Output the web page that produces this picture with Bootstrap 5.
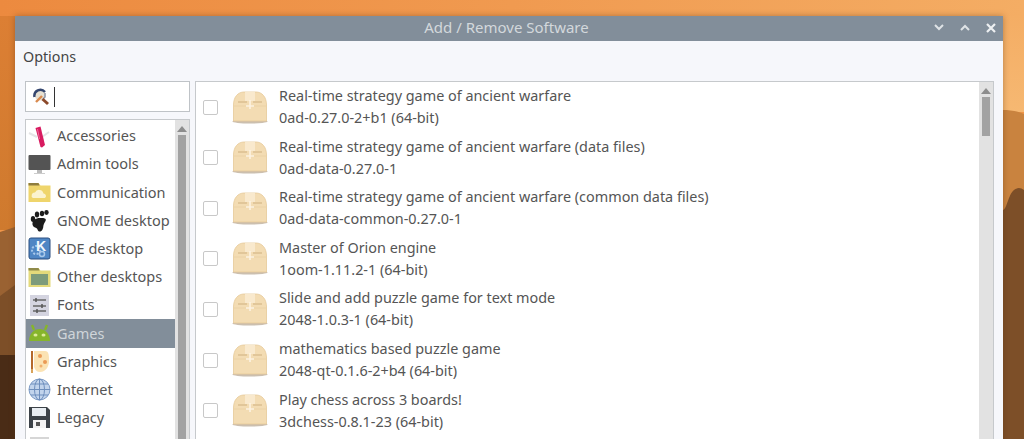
<!DOCTYPE html>
<html lang="en"><head><meta charset="utf-8"><title>Add / Remove Software</title>
<link href="https://cdn.jsdelivr.net/npm/bootstrap@5.3.0/dist/css/bootstrap.min.css" rel="stylesheet">
<style>
html,body{height:439px;overflow:hidden}
body{font-family:"Noto Sans","Open Sans",sans-serif;font-size:14px;color:#555;
background:#f09548 url("data:image/svg+xml,%3Csvg xmlns='http://www.w3.org/2000/svg' width='1024' height='439'%3E%3Cdefs%3E%3ClinearGradient id='h'%3E%3Cstop offset='0' stop-color='%23ec8a3f'/%3E%3Cstop offset='.5' stop-color='%23f09a50'/%3E%3Cstop offset='1' stop-color='%23f4ad64'/%3E%3C/linearGradient%3E%3ClinearGradient id='v' x2='0' y2='1'%3E%3Cstop offset='0' stop-color='%23dc7f34'/%3E%3Cstop offset='1' stop-color='%23cf7a2e'/%3E%3C/linearGradient%3E%3ClinearGradient id='r' x2='0' y2='1'%3E%3Cstop offset='0' stop-color='%23f4ad64'/%3E%3Cstop offset='1' stop-color='%23f6b872'/%3E%3C/linearGradient%3E%3C/defs%3E%3Crect width='1024' height='16' fill='url(%23h)'/%3E%3Crect y='16' width='15' height='214' fill='url(%23v)'/%3E%3Crect x='1003' y='16' width='21' height='96' fill='url(%23r)'/%3E%3Cpath d='M0 232L15 227V439H0Z' fill='%239a6232'/%3E%3Cpath d='M0 296L15 285V439H0Z' fill='%237d4f28'/%3E%3Cpath d='M0 355H15V439H0Z' fill='%234a2c16'/%3E%3Cpath d='M1003 110C1010 110 1018 111 1024 114V439H1003Z' fill='%23c9833f'/%3E%3Cpath d='M1003 210C1007 209 1008 195 1014 190C1018 187 1021 188 1024 190V439H1003Z' fill='%237d4f28'/%3E%3C/svg%3E") no-repeat 0 0;
 padding:16px 21px 0 15px}
.win{height:440px;background:#f6f7fb;box-shadow:0 0 6px rgba(90,50,20,.4)}
.ttl{height:25px;background:#828e9a;color:#d3d8dc;font-size:15px;padding-bottom:2px}
.ttl-sp{width:65px}
.ttl-name{flex:1;text-align:center}
.ttl-btns{width:70px;padding-right:6px}
.mnu{height:31px;padding-left:8px;font-size:14.3px;color:#444}
.pane{padding:9px 9px 0 10px;gap:5px;height:384px}
.side{width:165px;gap:7px}
.srch{height:31px;background:#fff;border:1px solid #bfc3c7;gap:4px;padding-left:6px;flex:none}
.crt{width:1px;height:20px;background:#333}
.cats{border:1px solid #c6c9cc;background:#fff;flex:1;min-height:0;overflow:hidden}
.catlist{flex:1;padding-top:2px}
.cat{height:28.2px;flex:none;padding-left:2px;gap:6px;font-size:14.5px;color:#555;white-space:nowrap}
.cat-on{background:#828e9a;color:#cfd5d9}
.catic{width:23px;height:23px;flex:none}
.vbar{width:14px;background:#e2e2e2;flex:none;padding:1px 1px 0}
.vup{width:0;height:0;border:5px solid transparent;border-top:0;border-bottom:6px solid #8d8d8d;margin:5px auto 3px}
.vth{background:#a2a2a2;width:8px;margin:0 auto}
.vth-l{height:auto;flex:1}
.vth-m{height:39px}
.pkgs{flex:1;border:1px solid #c6c9cc;background:#fff;overflow:hidden;min-width:0}
.rows{flex:1}
.pkg{height:50.55px;padding-left:7px;font-size:14.4px;color:#555;white-space:nowrap;flex:none}
.chk{width:15px;height:15px;border:1px solid #c8c8c8;border-radius:2px;background:#fff;flex:none}
.box{width:36px;height:33px;margin-left:14px;margin-right:11px;flex:none}
.ln{line-height:22px}
</style></head><body>
<svg width="0" height="0" class="d-block"><defs>
<symbol id="pk" viewBox="0 0 36 33"><ellipse cx="18" cy="30.500" rx="17.500" ry="2" fill="#a8957a" opacity=".6"/><path d="M1.500 14C1.500 6 6 1 12 1h12c6 0 10.500 5 10.500 13v16h-33z" fill="#f3dcb3" stroke="#e6c998" stroke-width=".8"/><path d="M2 15h32" stroke="#ebd2a6" stroke-width="1"/><path d="M13 1h10v9H13z" fill="#f9e9cd"/><path d="M6 11h9M21 11h9" stroke="#cfaf80" stroke-width="1.200"/><path d="M18 9v9M14 15h8" stroke="#fdf3e2" stroke-width="1.600"/></symbol>
</defs></svg>
<div class="win d-flex flex-column">
 <div class="ttl d-flex align-items-center">
  <div class="ttl-sp"></div><div class="ttl-name">Add / Remove Software</div>
  <div class="ttl-btns d-flex justify-content-between align-items-center">
   <svg width="12" height="9" viewBox="0 0 12 9"><path d="M2 2l4 4 4-4" fill="none" stroke="#dfe3e6" stroke-width="2"/></svg>
   <svg width="12" height="9" viewBox="0 0 12 9"><path d="M2 7l4-4 4 4" fill="none" stroke="#dfe3e6" stroke-width="2"/></svg>
   <svg width="12" height="12" viewBox="0 0 12 12"><path d="M2 2l8 8M10 2l-8 8" fill="none" stroke="#eef0f2" stroke-width="2.200"/></svg>
  </div>
 </div>
 <div class="mnu d-flex align-items-center">Options</div>
 <div class="pane d-flex">
  <div class="side d-flex flex-column">
   <div class="srch d-flex align-items-center">
    <svg width="18" height="18" viewBox="0 0 18 18"><circle cx="8" cy="7" r="5.500" fill="#e6e0d2"/><path d="M2.500 9A6 6 0 0 1 13 4" fill="none" stroke="#34466f" stroke-width="2.400"/><path d="M13 5v4l-2 2" fill="none" stroke="#8a93a8" stroke-width="1.500"/><path d="M10.500 11l5.500 5" stroke="#8c4a2b" stroke-width="3"/><path d="M4 14l6-6" stroke="#d98a4f" stroke-width="2.400"/></svg>
    <div class="crt"></div>
   </div>
   <div class="cats d-flex">
    <div class="catlist d-flex flex-column">
     <div class="cat d-flex align-items-center"><svg class="catic" viewBox="0 0 23 23"><path d="M1 8l8 4M14 12l7-5" stroke="#e4e4e6" stroke-width="2"/><path d="M7.500 3l5-1.500L17 20l-3 2.500-1.500-.5z" fill="#d81b60"/><path d="M9.500 4l2 10" stroke="#ef6b9b" stroke-width="1"/></svg>Accessories</div>
     <div class="cat d-flex align-items-center"><svg class="catic" viewBox="0 0 23 23"><rect x="0.500" y="2" width="22" height="15" rx="1" fill="#545454"/><path d="M9 17h5v3H9z" fill="#bbb"/><path d="M6 20h11v1H6z" fill="#ccc"/></svg>Admin tools</div>
     <div class="cat d-flex align-items-center"><svg class="catic" viewBox="0 0 23 23"><path d="M0.500 2h10l2 2.500h10V21H0.500z" fill="#efd56c"/><path d="M0.500 2h10l1 2.500H0.500z" fill="#8f7d3e"/><path d="M5 17a3 3 0 0 1 2-5.500 4.500 4.500 0 0 1 8.500 1A2.500 2.500 0 0 1 17 17z" fill="#fbf3d0"/></svg>Communication</div>
     <div class="cat d-flex align-items-center"><svg class="catic" viewBox="0 0 23 23"><path d="M12 9C7 9 4 12 4.500 15.500S9 18 9.500 20.500 13 23.500 14.500 20.500 14.500 17 17 13 16 9 12 9z" fill="#1c1c1c"/><ellipse cx="5" cy="10" rx="2.200" ry="3" fill="#1c1c1c"/><ellipse cx="9" cy="5.500" rx="2.200" ry="3" fill="#1c1c1c"/><ellipse cx="14" cy="4.500" rx="2.200" ry="2.800" fill="#1c1c1c"/><ellipse cx="18.500" cy="3.500" rx="2.200" ry="2.400" fill="#1c1c1c"/></svg>GNOME desktop</div>
     <div class="cat d-flex align-items-center"><svg class="catic" viewBox="0 0 23 23"><rect x="1" y="1" width="21" height="21" rx="2" fill="#4f86c4" stroke="#2c4f80"/><circle cx="8" cy="13" r="4" fill="none" stroke="#a8c8ea" stroke-width="2" stroke-dasharray="2 1.500"/><circle cx="14" cy="17" r="2.500" fill="none" stroke="#a8c8ea" stroke-width="1.500"/><text x="13" y="14" font-size="14" font-weight="700" fill="#f2f7fc" text-anchor="middle" font-family="Liberation Sans">K</text></svg>KDE desktop</div>
     <div class="cat d-flex align-items-center"><svg class="catic" viewBox="0 0 23 23"><path d="M0.500 2h10l2 2.500h10V21H0.500z" fill="#e3d97a"/><path d="M0.500 2h10l1 2.500H0.500z" fill="#8f8a4b"/><path d="M3 8h17v11H3z" fill="#7d9b7a"/></svg>Other desktops</div>
     <div class="cat d-flex align-items-center"><svg class="catic" viewBox="0 0 23 23"><rect x="2" y="1" width="19" height="21" fill="#d4d4e0"/><path d="M5 6h13M5 12h13M5 17h13" stroke="#666" stroke-width="1.300"/><path d="M8 4v4M14 10v4M9 15v4" stroke="#555" stroke-width="1.500"/></svg>Fonts</div>
     <div class="cat cat-on d-flex align-items-center"><svg class="catic" viewBox="0 0 23 23"><path d="M1 19c0-7 4.500-12 10.500-12S22 12 22 19z" fill="#86b52b"/><path d="M6 8L4 3M17 8l2-5" stroke="#86b52b" stroke-width="2.400"/><ellipse cx="7.500" cy="13" rx="2" ry="1.500" fill="#dcea9a"/><ellipse cx="15.500" cy="13" rx="2" ry="1.500" fill="#dcea9a"/></svg>Games</div>
     <div class="cat d-flex align-items-center"><svg class="catic" viewBox="0 0 23 23"><path d="M6 1h11c4 0 4 5 4 10s-3 11-9 11c-3 0-5-2-6-5z" fill="#fbe3b4"/><path d="M4 1v19" stroke="#b5692b" stroke-width="2"/><path d="M4 19v4" stroke="#d9a35a" stroke-width="2"/><circle cx="12" cy="6" r="2" fill="#ea9a55"/><circle cx="17" cy="12" r="2" fill="#ea9a55"/><circle cx="13" cy="16" r="1.500" fill="#f1b06e"/></svg>Graphics</div>
     <div class="cat d-flex align-items-center"><svg class="catic" viewBox="0 0 23 23"><circle cx="11.500" cy="11.500" r="10.500" fill="#c2d4ec" stroke="#7d9bc6"/><path d="M1 11.500h21M3 6h17M3 17h17M11.500 1v21" stroke="#6f8fbd"/><ellipse cx="11.500" cy="11.500" rx="5" ry="10.500" fill="none" stroke="#6f8fbd"/></svg>Internet</div>
     <div class="cat d-flex align-items-center"><svg class="catic" viewBox="0 0 23 23"><path d="M1 1h18l3 3v18H1z" fill="#3c4248"/><path d="M4 2h14v8H4z" fill="#e8edf2"/><path d="M5 14h13v8H5z" fill="#f3f3f3"/><path d="M8 16h4v4H8z" fill="#555"/></svg>Legacy</div>
     <div class="cat d-flex align-items-center"><svg class="catic" viewBox="0 0 23 23"><rect x="2" y="2" width="19" height="19" fill="#d6d6d6"/></svg></div>
    </div>
    <div class="vbar d-flex flex-column"><div class="vup"></div><div class="vth vth-l"></div></div>
   </div>
  </div>
  <div class="pkgs d-flex">
   <div class="rows d-flex flex-column">
    <div class="pkg d-flex align-items-center"><div class="chk"></div><svg class="box"><use href="#pk"/></svg><div class="ln"><div>Real-time strategy game of ancient warfare</div><div>0ad-0.27.0-2+b1 (64-bit)</div></div></div>
    <div class="pkg d-flex align-items-center"><div class="chk"></div><svg class="box"><use href="#pk"/></svg><div class="ln"><div>Real-time strategy game of ancient warfare (data files)</div><div>0ad-data-0.27.0-1</div></div></div>
    <div class="pkg d-flex align-items-center"><div class="chk"></div><svg class="box"><use href="#pk"/></svg><div class="ln"><div>Real-time strategy game of ancient warfare (common data files)</div><div>0ad-data-common-0.27.0-1</div></div></div>
    <div class="pkg d-flex align-items-center"><div class="chk"></div><svg class="box"><use href="#pk"/></svg><div class="ln"><div>Master of Orion engine</div><div>1oom-1.11.2-1 (64-bit)</div></div></div>
    <div class="pkg d-flex align-items-center"><div class="chk"></div><svg class="box"><use href="#pk"/></svg><div class="ln"><div>Slide and add puzzle game for text mode</div><div>2048-1.0.3-1 (64-bit)</div></div></div>
    <div class="pkg d-flex align-items-center"><div class="chk"></div><svg class="box"><use href="#pk"/></svg><div class="ln"><div>mathematics based puzzle game</div><div>2048-qt-0.1.6-2+b4 (64-bit)</div></div></div>
    <div class="pkg d-flex align-items-center"><div class="chk"></div><svg class="box"><use href="#pk"/></svg><div class="ln"><div>Play chess across 3 boards!</div><div>3dchess-0.8.1-23 (64-bit)</div></div></div>
   </div>
   <div class="vbar d-flex flex-column"><div class="vup"></div><div class="vth vth-m"></div></div>
  </div>
 </div>
</div>
</body></html>
